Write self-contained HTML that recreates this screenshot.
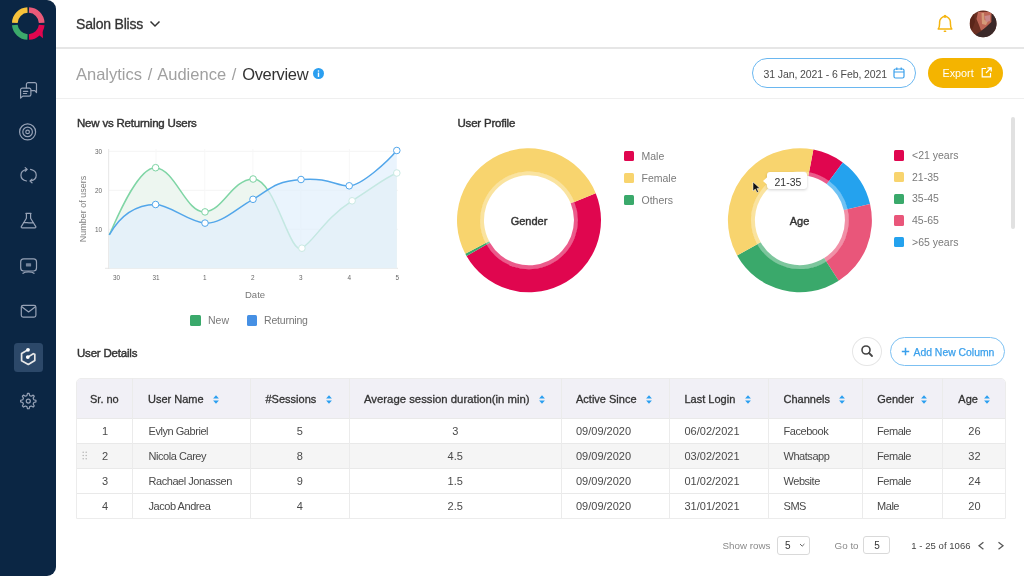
<!DOCTYPE html>
<html><head><meta charset="utf-8">
<style>
*{margin:0;padding:0;box-sizing:border-box}
html,body{width:1024px;height:576px;overflow:hidden;background:#fff;font-family:"Liberation Sans",sans-serif;color:#333}
.abs{position:absolute}
.m{-webkit-text-stroke:0.42px currentColor}
.t{position:absolute;white-space:nowrap;line-height:1}
#side{position:absolute;left:0;top:0;width:56px;height:576px;background:#0b2644;border-radius:0 9px 9px 0}
.th{position:absolute;top:379px;height:40px;-webkit-text-stroke:0.3px #333;font-size:11px;color:#333;line-height:40px;white-space:nowrap}
.sort{display:inline-block;vertical-align:middle;margin-left:9.5px;position:relative;top:-1px}
.cell{position:absolute;font-size:11px;color:#4a4a4a;white-space:nowrap;line-height:25px;height:25px}
</style></head><body>
<div id="root" style="position:absolute;left:0;top:0;width:1024px;height:576px;will-change:transform">
<div id="side">
<svg width="56" height="576" viewBox="0 0 56 576" style="position:absolute;left:0;top:0">
 <g fill="none" stroke-width="5.7">
  <path d="M14.8,22.8 A13.35,13.35 0 0 1 27.5,10" stroke="#f7c23b"/>
  <path d="M29,10 A13.35,13.35 0 0 1 41.7,22.8" stroke="#ea5a79"/>
  <path d="M14.8,25 A13.35,13.35 0 0 0 27.5,37" stroke="#3caa6b"/>
  <path d="M29,37 A13.35,13.35 0 0 0 41.7,25" stroke="#e0064f"/>
 </g>
 <path d="M36.5,33 L43,38.3 L42.5,30Z" fill="#e0064f"/>
 <g fill="none" stroke="#97a2b6" stroke-width="1.2" stroke-linejoin="round" stroke-linecap="round">
  <!-- chat -->
  <path d="M26.4,88 V84.4 a1.7,1.7 0 0 1 1.7,-1.7 H34.8 a1.7,1.7 0 0 1 1.7,1.7 V92.6 L34.9,90.7 H31.2"/>
  <path d="M22.3,88.1 H29.2 a1.7,1.7 0 0 1 1.7,1.7 V94.4 a1.7,1.7 0 0 1 -1.7,1.7 H22.8 L20.6,98 V89.8 a1.7,1.7 0 0 1 1.7,-1.7Z"/>
  <path d="M23.4,91.3 H27.8 M23.4,93.5 H26.6"/>
  <!-- target -->
  <circle cx="27.6" cy="131.9" r="8"/><circle cx="27.6" cy="131.9" r="4.8"/><circle cx="27.6" cy="131.9" r="1.8"/>
  <!-- sync -->
  <path d="M26.6,181 A7.6,6 0 0 1 26.6,169.4"/>
  <path d="M30.57,169.4 A7.6,6 0 0 1 30.57,181"/>
  <path d="M25.2,167.6 L27.2,169.4 L25.2,171.2 M32,179.2 L30,181 L32,182.8"/>
  <!-- flask -->
  <path d="M25.9,213.4 H31 M26.4,213.4 V218.2 L21.3,226.6 a0.9,0.9 0 0 0 0.8,1.3 H35 a0.9,0.9 0 0 0 0.8,-1.3 L30.6,218.2 V213.4 M23.5,222.7 C26,222 28,223.4 33.5,222.7"/>
  <!-- chat2 -->
  <rect x="20.7" y="258.8" width="15.8" height="12.2" rx="3"/>
  <rect x="25.9" y="263.3" width="5.2" height="3.2" rx="0.4" fill="#97a2b6" fill-opacity="0.75" stroke="none"/>
  <path d="M23,273.3 C25,271.5 32,271.5 34,273.3"/>
  <!-- mail -->
  <rect x="21.3" y="305.4" width="14.6" height="11.7" rx="1.8"/>
  <path d="M21.8,306.8 L28.6,312 L35.4,306.8"/>
  <!-- gear -->
  <path d="M26.92,395.57 L27.50,393.44 L29.10,393.44 L29.68,395.57 L31.24,396.21 L33.15,395.12 L34.28,396.25 L33.19,398.16 L33.83,399.72 L35.96,400.30 L35.96,401.90 L33.83,402.48 L33.19,404.04 L34.28,405.95 L33.15,407.08 L31.24,405.99 L29.68,406.63 L29.10,408.76 L27.50,408.76 L26.92,406.63 L25.36,405.99 L23.45,407.08 L22.32,405.95 L23.41,404.04 L22.77,402.48 L20.64,401.90 L20.64,400.30 L22.77,399.72 L23.41,398.16 L22.32,396.25 L23.45,395.12 L25.36,396.21Z"/>
  <circle cx="28.3" cy="401.1" r="2"/>
 </g>
 <rect x="14" y="343" width="29" height="29" rx="3.5" fill="#2c4869"/>
 <g fill="none" stroke="#e8e8e8" stroke-width="1.7" stroke-linejoin="round" stroke-linecap="round">
  <path d="M28,349.8 L21.6,353.4 V360.8 L28.3,364.4 L34.8,360.5 V354.3 L33.3,353.7 L27.8,357.1"/>
 </g>
 <circle cx="28" cy="349.8" r="1.9" fill="#fff"/><circle cx="27.8" cy="357.1" r="1.9" fill="#fff"/>
</svg>
</div>

<!-- header -->
<div class="t m" style="left:76px;top:16.9px;font-size:14px;letter-spacing:-0.2px;color:#333;-webkit-text-stroke:0.3px #333">Salon Bliss</div>
<svg class="abs" style="left:149px;top:20px" width="12" height="8" viewBox="0 0 12 8"><path d="M1.5,1.5 L6,6 L10.5,1.5" fill="none" stroke="#333" stroke-width="1.5"/></svg>
<svg class="abs" style="left:934.5px;top:13px" width="20" height="21" viewBox="0 0 20 21">
 <path d="M3.2,16 C4.5,14.5 4.6,13.5 4.6,10.5 V9 a5.4,5.4 0 0 1 10.8,0 V10.5 C15.4,13.5 15.5,14.5 16.8,16 Z" fill="none" stroke="#f5b50f" stroke-width="1.5" stroke-linejoin="round"/>
 <circle cx="10" cy="3.3" r="1.5" fill="#f5b50f"/>
 <rect x="8.7" y="17.6" width="2.6" height="1.5" rx="0.6" fill="#f5b50f"/>
</svg>
<svg class="abs" style="left:968px;top:9px" width="30" height="30" viewBox="968 9 30 30">
 <defs><clipPath id="av"><circle cx="983.1" cy="23.8" r="13.4"/></clipPath></defs>
 <g clip-path="url(#av)">
  <rect x="968" y="9" width="30" height="30" fill="#6b2f22"/>
  <path d="M970,16 L974,14 L975,22 L972,30 L970,28Z" fill="#5a2519"/>
  <path d="M978,12 L992,12 L991.5,22 L985,28.5 L981,30.5 L979,25 L976.5,19Z" fill="#bd6656"/>
  <path d="M981.5,13 L984,13 L984.5,20 L988,21 L986,25 L982,24Z" fill="#d49a78"/>
  <path d="M984.5,16 L990,15 L990,21 L986,22Z" fill="#c9888a"/>
  <path d="M991.5,9 L999,9 L999,40 L972,40 L975,35 L982,30.5 L986,27 L991.5,22Z" fill="#3b2929"/>
 </g>
</svg>
<div class="abs" style="left:56px;top:47px;width:968px;height:2px;background:#e6e6e6"></div>

<div class="t" style="left:76px;top:66px;font-size:16.5px;color:#a0a0a0;word-spacing:1.2px;margin-top:-0.4px">Analytics / Audience / <span style="color:#333;letter-spacing:-0.35px;word-spacing:0">Overview</span></div>
<svg class="abs" style="left:313px;top:67.7px" width="11" height="11" viewBox="0 0 11 11"><circle cx="5.5" cy="5.5" r="5.5" fill="#2b9ff0"/><rect x="4.8" y="4.6" width="1.4" height="4.3" fill="#fff"/><circle cx="5.5" cy="3" r="0.8" fill="#fff"/></svg>

<div class="abs" style="left:752px;top:58px;width:164px;height:30px;border:1.2px solid #6ab7f0;border-radius:15px"></div>
<div class="t" style="left:763.5px;top:68.6px;font-size:10.5px;color:#4a4a4a;letter-spacing:-0.1px">31 Jan, 2021 - 6 Feb, 2021</div>
<svg class="abs" style="left:893px;top:67px" width="12" height="12" viewBox="0 0 12 12"><rect x="1" y="2" width="10" height="9" rx="1.5" fill="none" stroke="#3aa0ec" stroke-width="1.2"/><path d="M1,5 H11 M3.8,0.5 V3 M8.2,0.5 V3" stroke="#3aa0ec" stroke-width="1.2"/></svg>

<div class="abs" style="left:928px;top:58px;width:75px;height:30px;background:#f4b400;border-radius:15px"></div>
<div class="t" style="left:942.5px;top:68px;font-size:10.8px;color:#fff">Export</div>
<svg class="abs" style="left:981px;top:67px" width="11" height="11" viewBox="0 0 11 11"><path d="M5,1.5 H1.2 V9.8 H9.5 V6" fill="none" stroke="#fff" stroke-width="1.2"/><path d="M5,6 L10,1 M6.5,0.8 H10.2 V4.5" fill="none" stroke="#fff" stroke-width="1.2"/></svg>

<div class="abs" style="left:56px;top:98px;width:968px;height:1px;background:#efefef"></div>
<div class="abs" style="left:1011px;top:116.5px;width:4px;height:112px;background:#e1e1e1;border-radius:2px"></div>

<!-- section titles -->
<div class="t m" style="left:77px;top:118px;font-size:11.5px;letter-spacing:-0.2px;color:#333">New vs Returning Users</div>
<div class="t m" style="left:457.5px;top:118px;font-size:11.5px;letter-spacing:-0.2px;color:#333">User Profile</div>
<div class="t m" style="left:77px;top:348.3px;font-size:11.5px;letter-spacing:-0.2px;color:#333">User Details</div>

<svg class="abs" style="left:0;top:0" width="1024" height="576" viewBox="0 0 1024 576">
<g stroke="#f4f4f4" stroke-width="1">
<line x1="109" y1="151.3" x2="398" y2="151.3"/>
<line x1="109" y1="190.3" x2="398" y2="190.3"/>
<line x1="109" y1="229.3" x2="398" y2="229.3"/>
<g stroke="#f7f7f7"><line x1="156" y1="149" x2="156" y2="268"/><line x1="204.8" y1="149" x2="204.8" y2="268"/><line x1="252.9" y1="149" x2="252.9" y2="268"/><line x1="301" y1="149" x2="301" y2="268"/><line x1="349.3" y1="149" x2="349.3" y2="268"/></g>
</g>
<line x1="108.7" y1="149" x2="108.7" y2="269" stroke="#e6e6e6" stroke-width="1"/>
<line x1="105" y1="268.3" x2="398" y2="268.3" stroke="#e6e6e6" stroke-width="1"/>
<path d="M109.3,234.9 C113.5,226.3 137.1,166.2 155.6,167.7 C175.4,169.3 186.0,213.4 205.0,211.9 C223.5,210.5 231.6,179.8 253.1,179.0 C274.9,178.2 289.5,255.7 301.9,248.2 C314.7,240.4 324.6,218.3 352.1,200.8 C376.6,185.2 384.4,178.1 396.8,173.0 L396.8,268.3 L109.3,268.3Z" fill="#edf6f0"/>
<path d="M109.3,234.9 C113.5,226.3 137.1,166.2 155.6,167.7 C175.4,169.3 186.0,213.4 205.0,211.9 C223.5,210.5 231.6,179.8 253.1,179.0 C274.9,178.2 289.5,255.7 301.9,248.2 C314.7,240.4 324.6,218.3 352.1,200.8 C376.6,185.2 384.4,178.1 396.8,173.0" fill="none" stroke="#7fd5a5" stroke-width="1.5"/>
<circle cx="155.6" cy="167.7" r="3.3" fill="#fff" stroke="#7dd3a3" stroke-width="1"/><circle cx="205.0" cy="211.9" r="3.3" fill="#fff" stroke="#7dd3a3" stroke-width="1"/><circle cx="253.1" cy="179.0" r="3.3" fill="#fff" stroke="#7dd3a3" stroke-width="1"/>
<path d="M109.3,234.9 C123.8,208.8 143.1,204.7 155.6,204.5 C168.9,204.3 188.5,221.9 205.0,223.1 C221.0,224.3 236.5,208.3 253.0,199.3 C269.5,190.3 272.2,181.8 301.0,179.5 C329.9,177.2 335.8,186.3 349.2,185.8 C362.4,185.3 389.0,159.9 396.8,150.5 L396.8,268.3 L109.3,268.3Z" fill="rgb(225,239,252)" fill-opacity="0.7"/>
<circle cx="301.9" cy="248.2" r="3.3" fill="#fff" stroke="#c9e9e3" stroke-width="1"/><circle cx="352.1" cy="200.8" r="3.3" fill="#fff" stroke="#c9e9e3" stroke-width="1"/><circle cx="396.8" cy="173.0" r="3.3" fill="#fff" stroke="#c9e9e3" stroke-width="1"/>
<path d="M109.3,234.9 C123.8,208.8 143.1,204.7 155.6,204.5 C168.9,204.3 188.5,221.9 205.0,223.1 C221.0,224.3 236.5,208.3 253.0,199.3 C269.5,190.3 272.2,181.8 301.0,179.5 C329.9,177.2 335.8,186.3 349.2,185.8 C362.4,185.3 389.0,159.9 396.8,150.5" fill="none" stroke="#52a6ea" stroke-width="1.5"/>
<circle cx="155.6" cy="204.5" r="3.3" fill="#fff" stroke="#52a6ea" stroke-width="1"/><circle cx="205.0" cy="223.1" r="3.3" fill="#fff" stroke="#52a6ea" stroke-width="1"/><circle cx="253.0" cy="199.3" r="3.3" fill="#fff" stroke="#52a6ea" stroke-width="1"/><circle cx="301.0" cy="179.5" r="3.3" fill="#fff" stroke="#52a6ea" stroke-width="1"/><circle cx="349.2" cy="185.8" r="3.3" fill="#fff" stroke="#52a6ea" stroke-width="1"/><circle cx="396.8" cy="150.5" r="3.3" fill="#fff" stroke="#52a6ea" stroke-width="1"/>
<path d="M595.71,193.21 A72,72 0 0 1 466.52,256.08 L486.57,244.60 A48.9,48.9 0 0 0 574.31,201.90Z" fill="#e0064f"/>
<path d="M466.52,256.08 A72,72 0 0 1 465.25,253.77 L485.70,243.03 A48.9,48.9 0 0 0 486.57,244.60Z" fill="#3aa96b"/>
<path d="M465.25,253.77 A72,72 0 1 1 595.71,193.21 L574.31,201.90 A48.9,48.9 0 1 0 485.70,243.03Z" fill="#f8d46e"/>
<path d="M574.59,201.79 A49.199999999999996,49.199999999999996 0 0 1 486.31,244.75 L489.95,242.66 A45,45 0 0 0 570.69,203.37Z" fill="#e0064f" fill-opacity="0.66"/>
<path d="M486.31,244.75 A49.199999999999996,49.199999999999996 0 0 1 485.44,243.17 L489.16,241.22 A45,45 0 0 0 489.95,242.66Z" fill="#3aa96b" fill-opacity="0.66"/>
<path d="M485.44,243.17 A49.199999999999996,49.199999999999996 0 1 1 574.59,201.79 L570.69,203.37 A45,45 0 1 0 489.16,241.22Z" fill="#f8d46e" fill-opacity="0.66"/>
<path d="M813.39,149.48 A72,72 0 0 1 842.83,162.40 L829.06,180.94 A48.9,48.9 0 0 0 809.06,172.17Z" fill="#e0064f"/>
<path d="M842.83,162.40 A72,72 0 0 1 870.05,204.00 L847.55,209.20 A48.9,48.9 0 0 0 829.06,180.94Z" fill="#24a2ee"/>
<path d="M870.05,204.00 A72,72 0 0 1 838.69,280.86 L826.25,261.40 A48.9,48.9 0 0 0 847.55,209.20Z" fill="#e9567a"/>
<path d="M838.69,280.86 A72,72 0 0 1 737.11,255.44 L757.26,244.13 A48.9,48.9 0 0 0 826.25,261.40Z" fill="#3aa96b"/>
<path d="M737.11,255.44 A72,72 0 0 1 813.39,149.48 L809.06,172.17 A48.9,48.9 0 0 0 757.26,244.13Z" fill="#f8d46e"/>
<path d="M809.12,171.87 A49.199999999999996,49.199999999999996 0 0 1 829.23,180.70 L826.73,184.07 A45,45 0 0 0 808.33,176.00Z" fill="#e0064f" fill-opacity="0.66"/>
<path d="M829.23,180.70 A49.199999999999996,49.199999999999996 0 0 1 847.84,209.13 L843.75,210.08 A45,45 0 0 0 826.73,184.07Z" fill="#24a2ee" fill-opacity="0.66"/>
<path d="M847.84,209.13 A49.199999999999996,49.199999999999996 0 0 1 826.41,261.65 L824.14,258.11 A45,45 0 0 0 843.75,210.08Z" fill="#e9567a" fill-opacity="0.66"/>
<path d="M826.41,261.65 A49.199999999999996,49.199999999999996 0 0 1 756.99,244.28 L760.66,242.22 A45,45 0 0 0 824.14,258.11Z" fill="#3aa96b" fill-opacity="0.66"/>
<path d="M756.99,244.28 A49.199999999999996,49.199999999999996 0 0 1 809.12,171.87 L808.33,176.00 A45,45 0 0 0 760.66,242.22Z" fill="#f8d46e" fill-opacity="0.66"/>
</svg>

<!-- chart text -->
<div class="t" style="left:83px;top:209px;font-size:9px;color:#808080;transform:translate(-50%,-50%) rotate(-90deg)">Number of users</div>
<div class="t" style="left:95px;top:148.5px;font-size:6.4px;color:#666">30</div>
<div class="t" style="left:95px;top:187.5px;font-size:6.4px;color:#666">20</div>
<div class="t" style="left:95px;top:226.5px;font-size:6.4px;color:#666">10</div>
<div class="t" style="left:113px;top:274.5px;font-size:6.4px;color:#666">30</div>
<div class="t" style="left:152.5px;top:274.5px;font-size:6.4px;color:#666">31</div>
<div class="t" style="left:203px;top:274.5px;font-size:6.4px;color:#666">1</div>
<div class="t" style="left:251px;top:274.5px;font-size:6.4px;color:#666">2</div>
<div class="t" style="left:299px;top:274.5px;font-size:6.4px;color:#666">3</div>
<div class="t" style="left:347.5px;top:274.5px;font-size:6.4px;color:#666">4</div>
<div class="t" style="left:395.5px;top:274.5px;font-size:6.4px;color:#666">5</div>
<div class="t" style="left:245px;top:290px;font-size:9.5px;color:#777">Date</div>
<div class="abs" style="left:190px;top:315px;width:10.5px;height:10.5px;background:#3aa96b;border-radius:1.5px"></div>
<div class="t" style="left:208px;top:315px;font-size:10.5px;color:#7a7a7a">New</div>
<div class="abs" style="left:246.5px;top:315px;width:10.5px;height:10.5px;background:#4690e4;border-radius:1.5px"></div>
<div class="t" style="left:264px;top:315px;font-size:10.5px;color:#777;letter-spacing:-0.2px">Returning</div>

<!-- donut text -->
<div class="t m" style="left:529px;top:220.5px;transform:translate(-50%,-50%);font-size:11px;color:#333">Gender</div>
<div class="t m" style="left:799.5px;top:220.5px;transform:translate(-50%,-50%);font-size:11px;color:#333">Age</div>

<div class="abs" style="left:624px;top:151px;width:10.3px;height:10px;background:#e0064f;border-radius:1.5px"></div>
<div class="t" style="left:641.5px;top:150.5px;font-size:10.5px;color:#7a7a7a">Male</div>
<div class="abs" style="left:624px;top:173px;width:10.3px;height:10px;background:#f8d46e;border-radius:1.5px"></div>
<div class="t" style="left:641.5px;top:172.5px;font-size:10.5px;color:#7a7a7a">Female</div>
<div class="abs" style="left:624px;top:195px;width:10.3px;height:10px;background:#3aa96b;border-radius:1.5px"></div>
<div class="t" style="left:641.5px;top:194.5px;font-size:10.5px;color:#7a7a7a">Others</div>

<div class="abs" style="left:894px;top:150.3px;width:10.4px;height:10.4px;background:#e0064f;border-radius:1.5px"></div>
<div class="t" style="left:912px;top:150px;font-size:10.5px;color:#7a7a7a">&lt;21 years</div>
<div class="abs" style="left:894px;top:172px;width:10.4px;height:10.4px;background:#f8d46e;border-radius:1.5px"></div>
<div class="t" style="left:912px;top:171.7px;font-size:10.5px;color:#7a7a7a">21-35</div>
<div class="abs" style="left:894px;top:193.7px;width:10.4px;height:10.4px;background:#3aa96b;border-radius:1.5px"></div>
<div class="t" style="left:912px;top:193.4px;font-size:10.5px;color:#7a7a7a">35-45</div>
<div class="abs" style="left:894px;top:215.4px;width:10.4px;height:10.4px;background:#e9567a;border-radius:1.5px"></div>
<div class="t" style="left:912px;top:215.1px;font-size:10.5px;color:#7a7a7a">45-65</div>
<div class="abs" style="left:894px;top:237.1px;width:10.4px;height:10.4px;background:#24a2ee;border-radius:1.5px"></div>
<div class="t" style="left:912px;top:236.8px;font-size:10.5px;color:#7a7a7a">&gt;65 years</div>

<!-- tooltip -->
<div class="abs" style="left:766.8px;top:172.3px;width:40.5px;height:17.2px;background:#fff;border-radius:3px;box-shadow:0 1px 3px rgba(0,0,0,0.18)"></div>
<svg class="abs" style="left:762px;top:176px" width="6" height="10" viewBox="0 0 6 10"><path d="M6,0.5 L1,5 L6,9.5Z" fill="#fff"/></svg>
<div class="t" style="left:774.5px;top:176.5px;font-size:10.5px;color:#333">21-35</div>
<svg class="abs" style="left:752px;top:181px" width="10" height="13" viewBox="0 0 10 13"><path d="M1,1 L1,10 L3.3,8 L5,11.5 L6.5,10.8 L4.9,7.4 L7.8,7.2Z" fill="#111" stroke="#fff" stroke-width="0.5"/></svg>

<!-- search & add column -->
<div class="abs" style="left:852.3px;top:337px;width:29.4px;height:29px;border:1px solid #e6e6e6;border-radius:50%"></div>
<svg class="abs" style="left:860px;top:344px" width="14" height="14" viewBox="0 0 14 14"><circle cx="6" cy="6" r="4" fill="none" stroke="#444" stroke-width="1.6"/><path d="M9,9 L12,12" stroke="#444" stroke-width="1.8" stroke-linecap="round"/></svg>
<div class="abs" style="left:890.4px;top:337px;width:114.8px;height:29px;border:1px solid #7cc0f2;border-radius:15px"></div>
<svg class="abs" style="left:901px;top:347px" width="9" height="9" viewBox="0 0 9 9"><path d="M4.5,0.8 V8.2 M0.8,4.5 H8.2" stroke="#3aa0ec" stroke-width="1.5"/></svg>
<div class="t m" style="left:913.5px;top:347.5px;font-size:10.4px;color:#3aa0ec;-webkit-text-stroke:0.25px #3aa0ec">Add New Column</div>

<!-- table -->
<div class="abs" style="left:76px;top:378px;width:929.8px;height:140.5px;border:1px solid #ececec;border-radius:5px 5px 0 0;overflow:hidden">
 <div class="abs" style="left:0;top:0;width:929px;height:39px;background:#f1f0f6"></div>
 <div class="abs" style="left:0;top:64px;width:929px;height:25px;background:#f5f5f5"></div>
 <div class="abs" style="left:0;top:39px;width:929px;height:1px;background:#e9e9e9"></div>
 <div class="abs" style="left:0;top:64px;width:929px;height:1px;background:#e9e9e9"></div>
 <div class="abs" style="left:0;top:89px;width:929px;height:1px;background:#e9e9e9"></div>
 <div class="abs" style="left:0;top:114px;width:929px;height:1px;background:#e9e9e9"></div>
</div>
<div class="abs" style="left:132px;top:378px;width:1px;height:140px;background:#ebebeb"></div>
<div class="abs" style="left:249.5px;top:378px;width:1px;height:140px;background:#ebebeb"></div>
<div class="abs" style="left:348.5px;top:378px;width:1px;height:140px;background:#ebebeb"></div>
<div class="abs" style="left:560.5px;top:378px;width:1px;height:140px;background:#ebebeb"></div>
<div class="abs" style="left:668.5px;top:378px;width:1px;height:140px;background:#ebebeb"></div>
<div class="abs" style="left:768px;top:378px;width:1px;height:140px;background:#ebebeb"></div>
<div class="abs" style="left:861.5px;top:378px;width:1px;height:140px;background:#ebebeb"></div>
<div class="abs" style="left:942px;top:378px;width:1px;height:140px;background:#ebebeb"></div>
<div class="th" style="left:90px;">Sr. no</div>
<div class="th" style="left:148px;">User Name<svg class="sort" width="6" height="9" viewBox="0 0 6 9"><path d="M3,0.2 L5.9,3.4 H0.1Z M3,8.8 L5.9,5.6 H0.1Z" fill="#2b9ff0"/></svg></div>
<div class="th" style="left:265.5px;">#Sessions<svg class="sort" width="6" height="9" viewBox="0 0 6 9"><path d="M3,0.2 L5.9,3.4 H0.1Z M3,8.8 L5.9,5.6 H0.1Z" fill="#2b9ff0"/></svg></div>
<div class="th" style="left:364px;font-size:11.35px">Average session duration(in min)<svg class="sort" width="6" height="9" viewBox="0 0 6 9"><path d="M3,0.2 L5.9,3.4 H0.1Z M3,8.8 L5.9,5.6 H0.1Z" fill="#2b9ff0"/></svg></div>
<div class="th" style="left:576px;">Active Since<svg class="sort" width="6" height="9" viewBox="0 0 6 9"><path d="M3,0.2 L5.9,3.4 H0.1Z M3,8.8 L5.9,5.6 H0.1Z" fill="#2b9ff0"/></svg></div>
<div class="th" style="left:684.5px;">Last Login<svg class="sort" width="6" height="9" viewBox="0 0 6 9"><path d="M3,0.2 L5.9,3.4 H0.1Z M3,8.8 L5.9,5.6 H0.1Z" fill="#2b9ff0"/></svg></div>
<div class="th" style="left:783.5px;">Channels<svg class="sort" width="6" height="9" viewBox="0 0 6 9"><path d="M3,0.2 L5.9,3.4 H0.1Z M3,8.8 L5.9,5.6 H0.1Z" fill="#2b9ff0"/></svg></div>
<div class="th" style="left:877.3px;">Gender<svg class="sort" style="margin-left:6.8px" width="6" height="9" viewBox="0 0 6 9"><path d="M3,0.2 L5.9,3.4 H0.1Z M3,8.8 L5.9,5.6 H0.1Z" fill="#2b9ff0"/></svg></div>
<div class="th" style="left:958.3px;">Age<svg class="sort" style="margin-left:5.8px" width="6" height="9" viewBox="0 0 6 9"><path d="M3,0.2 L5.9,3.4 H0.1Z M3,8.8 L5.9,5.6 H0.1Z" fill="#2b9ff0"/></svg></div>
<div class="cell" style="left:77.2px;width:55.5px;top:418.8px;text-align:center">1</div><div class="cell" style="left:148.5px;top:418.8px;letter-spacing:-0.45px">Evlyn Gabriel</div><div class="cell" style="left:250.2px;width:99.0px;top:418.8px;text-align:center">5</div><div class="cell" style="left:349.2px;width:212.0px;top:418.8px;text-align:center">3</div><div class="cell" style="left:576px;top:418.8px;letter-spacing:0">09/09/2020</div><div class="cell" style="left:684.5px;top:418.8px;letter-spacing:0">06/02/2021</div><div class="cell" style="left:783.5px;top:418.8px;letter-spacing:-0.45px">Facebook</div><div class="cell" style="left:877px;top:418.8px;letter-spacing:-0.45px">Female</div><div class="cell" style="left:942.7px;width:63.5px;top:418.8px;text-align:center">26</div>
<div class="cell" style="left:77.2px;width:55.5px;top:443.8px;text-align:center">2</div><div class="cell" style="left:148.5px;top:443.8px;letter-spacing:-0.45px">Nicola Carey</div><div class="cell" style="left:250.2px;width:99.0px;top:443.8px;text-align:center">8</div><div class="cell" style="left:349.2px;width:212.0px;top:443.8px;text-align:center">4.5</div><div class="cell" style="left:576px;top:443.8px;letter-spacing:0">09/09/2020</div><div class="cell" style="left:684.5px;top:443.8px;letter-spacing:0">03/02/2021</div><div class="cell" style="left:783.5px;top:443.8px;letter-spacing:-0.45px">Whatsapp</div><div class="cell" style="left:877px;top:443.8px;letter-spacing:-0.45px">Female</div><div class="cell" style="left:942.7px;width:63.5px;top:443.8px;text-align:center">32</div>
<div class="cell" style="left:77.2px;width:55.5px;top:468.8px;text-align:center">3</div><div class="cell" style="left:148.5px;top:468.8px;letter-spacing:-0.45px">Rachael Jonassen</div><div class="cell" style="left:250.2px;width:99.0px;top:468.8px;text-align:center">9</div><div class="cell" style="left:349.2px;width:212.0px;top:468.8px;text-align:center">1.5</div><div class="cell" style="left:576px;top:468.8px;letter-spacing:0">09/09/2020</div><div class="cell" style="left:684.5px;top:468.8px;letter-spacing:0">01/02/2021</div><div class="cell" style="left:783.5px;top:468.8px;letter-spacing:-0.45px">Website</div><div class="cell" style="left:877px;top:468.8px;letter-spacing:-0.45px">Female</div><div class="cell" style="left:942.7px;width:63.5px;top:468.8px;text-align:center">24</div>
<div class="cell" style="left:77.2px;width:55.5px;top:493.8px;text-align:center">4</div><div class="cell" style="left:148.5px;top:493.8px;letter-spacing:-0.45px">Jacob Andrea</div><div class="cell" style="left:250.2px;width:99.0px;top:493.8px;text-align:center">4</div><div class="cell" style="left:349.2px;width:212.0px;top:493.8px;text-align:center">2.5</div><div class="cell" style="left:576px;top:493.8px;letter-spacing:0">09/09/2020</div><div class="cell" style="left:684.5px;top:493.8px;letter-spacing:0">31/01/2021</div><div class="cell" style="left:783.5px;top:493.8px;letter-spacing:-0.45px">SMS</div><div class="cell" style="left:877px;top:493.8px;letter-spacing:-0.45px">Male</div><div class="cell" style="left:942.7px;width:63.5px;top:493.8px;text-align:center">20</div>
<svg class="abs" style="left:82px;top:451px" width="6" height="11" viewBox="0 0 6 11"><g fill="#b8b8b8"><circle cx="1.2" cy="1.2" r="0.8"/><circle cx="4.2" cy="1.2" r="0.8"/><circle cx="1.2" cy="4.5" r="0.8"/><circle cx="4.2" cy="4.5" r="0.8"/><circle cx="1.2" cy="7.8" r="0.8"/><circle cx="4.2" cy="7.8" r="0.8"/></g></svg>

<!-- pagination -->
<div class="t" style="left:722.5px;top:540.6px;font-size:9.8px;color:#8a8a8a">Show rows</div>
<div class="abs" style="left:777.3px;top:536.2px;width:33px;height:18.4px;border:1px solid #d9d9d9;border-radius:3px"></div>
<div class="t" style="left:785px;top:541.3px;font-size:10px;color:#333">5</div>
<svg class="abs" style="left:799px;top:543px" width="7" height="5" viewBox="0 0 7 5"><path d="M1,1 L3.2,3.2 L5.4,1" fill="none" stroke="#666" stroke-width="1"/></svg>
<div class="t" style="left:834.6px;top:540.6px;font-size:9.8px;color:#8a8a8a">Go to</div>
<div class="abs" style="left:863.4px;top:536.3px;width:26.2px;height:18.2px;border:1px solid #d9d9d9;border-radius:3px"></div>
<div class="t" style="left:874.3px;top:541.3px;font-size:10px;color:#333">5</div>
<div class="t" style="left:911.3px;top:540.6px;font-size:9.5px;color:#444;letter-spacing:0.05px">1 - 25 of 1066</div>
<svg class="abs" style="left:976px;top:540px" width="10" height="12" viewBox="0 0 10 12"><path d="M7.4,2.2 L3,5.7 L7.4,9.2" fill="none" stroke="#555" stroke-width="1.25"/></svg>
<svg class="abs" style="left:996px;top:540px" width="10" height="12" viewBox="0 0 10 12"><path d="M2.5,2.2 L7,5.7 L2.5,9.2" fill="none" stroke="#555" stroke-width="1.25"/></svg>
</div>
</body></html>
